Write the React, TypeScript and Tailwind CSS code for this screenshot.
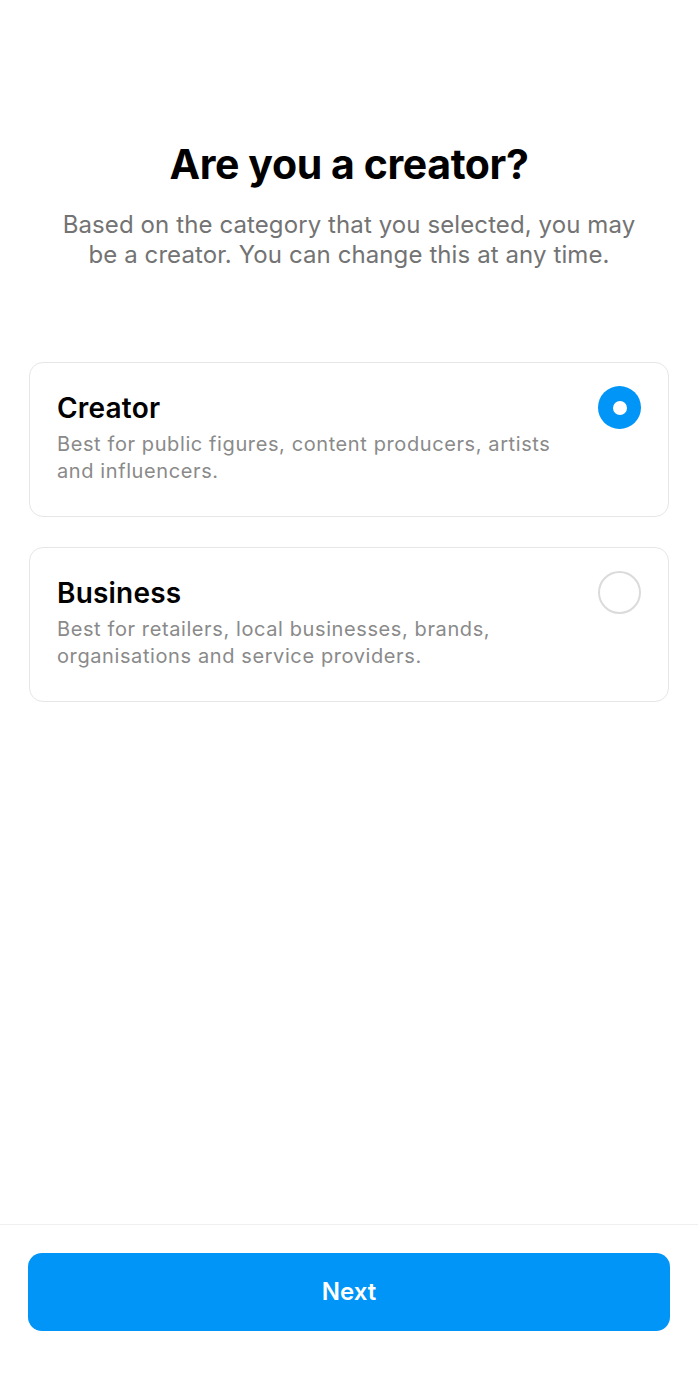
import { useState } from 'react';

const options = [
  {
    id: 'creator',
    title: 'Creator',
    description: 'Best for public figures, content producers, artists and influencers.'
  },
  {
    id: 'business',
    title: 'Business',
    description: 'Best for retailers, local businesses, brands, organisations and service providers.'
  }
];

function Radio({ checked }: { checked: boolean }) {
  if (checked) {
    return (
      <span className="flex h-[43px] w-[43px] shrink-0 items-center justify-center rounded-full bg-[#0095f6]">
        <span className="h-[14px] w-[14px] rounded-full bg-white" />
      </span>
    );
  }
  return <span className="block h-[43px] w-[43px] shrink-0 rounded-full border-2 border-[#dbdbdb]" />;
}

export default function App() {
  const [selected, setSelected] = useState('creator');

  return (
    <div className="flex h-[1388px] flex-col bg-white font-['Inter','Noto_Sans',sans-serif] text-black">
      <div className="flex-1 px-[28px] pt-[140px]">
        <h1 className="text-center text-[41px] font-bold leading-[48px] tracking-[-0.4px]">
          Are you a creator?
        </h1>
        <p className="mx-auto mt-[22px] max-w-[590px] text-center text-[24px] leading-[30px] tracking-[0.1px] text-[#737373]">
          Based on the category that you selected, you may be a creator. You can change this at any time.
        </p>

        <div className="mt-[92px] flex flex-col gap-[30px] px-px">
          {options.map(option => (
            <button
              key={option.id}
              type="button"
              onClick={() => setSelected(option.id)}
              className="rounded-[14px] border border-[#e6e6e6] px-[27px] pb-[31px] pt-[23px] text-left"
            >
              <div className="flex items-center justify-between">
                <span className="text-[28px] font-semibold leading-[34px] tracking-[0.2px]">{option.title}</span>
                <Radio checked={selected === option.id} />
              </div>
              <p className="mt-[2px] max-w-[510px] text-[20px] leading-[27px] tracking-[0.6px] text-[#8a8a8a]">
                {option.description}
              </p>
            </button>
          ))}
        </div>
      </div>

      <div className="border-t border-[#efefef] px-[28px] pb-[57px] pt-[28px]">
        <button
          type="button"
          className="flex h-[78px] w-full items-center justify-center rounded-[14px] bg-[#0095f6] text-[24px] font-semibold text-white"
        >
          Next
        </button>
      </div>
    </div>
  );
}
